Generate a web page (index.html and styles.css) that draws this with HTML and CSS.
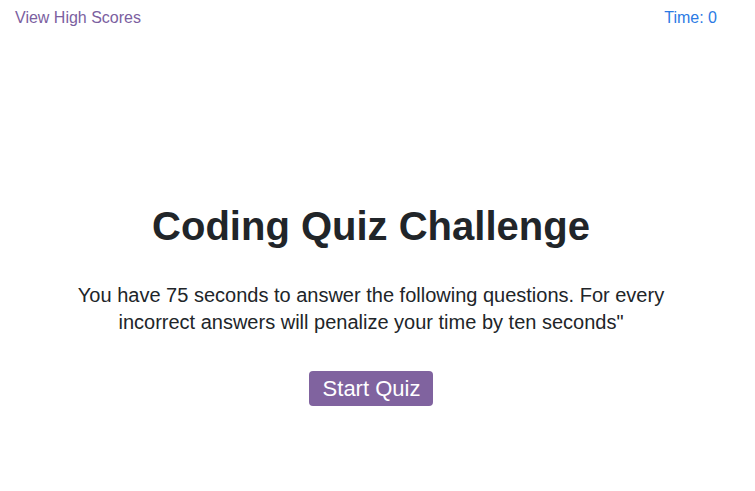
FILE: index.html
```html
<!DOCTYPE html>
<html>

<head>
    <meta charset="UTF-8">
    <meta name="viewport" content="width=device-width, initial-scale=1">
    <title>Coding Quiz</title>
    <link rel="stylesheet" href="styles.css">
</head>

<body>
    <header class="top-bar">
        <a href="#" class="scores-link">View High Scores</a>
        <span class="timer">Time: <span id="time">0</span></span>
    </header>

    <main class="start-screen">
        <h1 class="quiz-title">Coding Quiz Challenge</h1>
        <p class="quiz-intro">You have 75 seconds to answer the following questions. For every incorrect answers will penalize your time by ten seconds"</p>
        <button class="start-btn" id="startBtn">Start Quiz</button>
    </main>
</body>

</html>
```

FILE: styles.css
```css
body {
    margin: 0;
    background: #fff;
    color: #212529;
    font-family: "Liberation Sans", Arial, sans-serif;
    font-size: 16px;
}

.top-bar {
    display: flex;
    justify-content: space-between;
    align-items: center;
    padding: 9px 38px 0 15px;
    line-height: 18px;
}

.scores-link {
    color: #7b609f;
    text-decoration: none;
}

.timer {
    color: #2b7ae4;
}

.start-screen {
    display: flex;
    flex-direction: column;
    align-items: center;
    text-align: center;
    padding: 0 73px 0 60px;
    margin-top: 175px;
}

.quiz-title {
    margin: 0;
    font-size: 40px;
    font-weight: bold;
    line-height: 48px;
}

.quiz-intro {
    margin: 32px 0 0;
    font-size: 20px;
    line-height: 27px;
    max-width: 600px;
}

.start-btn {
    margin-top: 35px;
    padding: 5px 13px 5px 14px;
    background: #80639f;
    border: none;
    border-radius: 4px;
    color: #fff;
    font-family: inherit;
    font-size: 22px;
    line-height: 25px;
    cursor: pointer;
}
```
